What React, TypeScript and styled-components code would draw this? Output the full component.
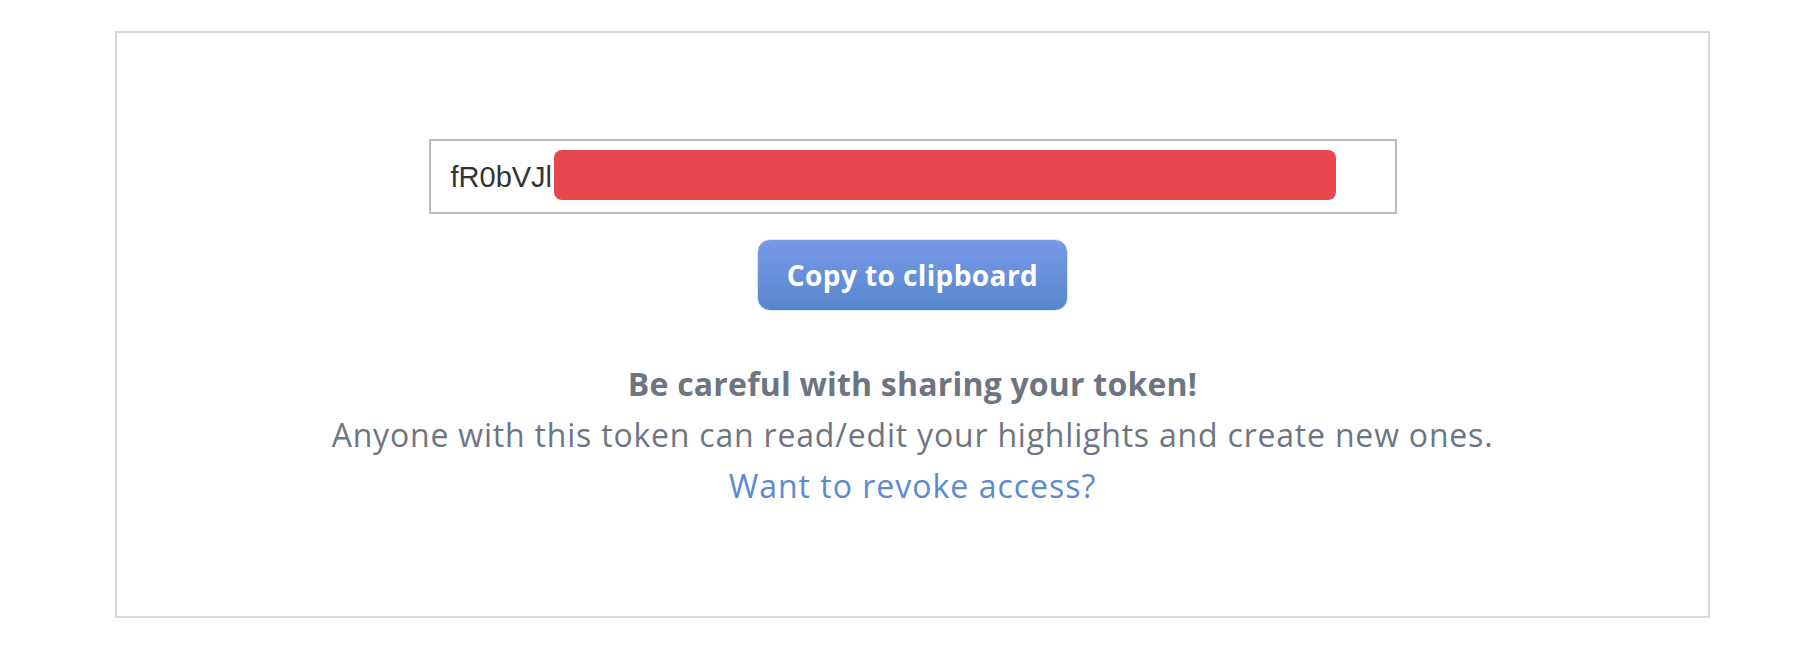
import * as React from "react"
import styled, {createGlobalStyle} from "styled-components"

const GlobalStyle = createGlobalStyle`
  body {
    margin: 0;
    background: #fff;
    font-family: 'Open Sans', 'Noto Sans', sans-serif;
  }
`

export default function App() {
    return (
        <>
            <GlobalStyle />
            <Page>
                <Panel>
                    <TokenField>
                        <TokenText>fR0bVJl</TokenText>
                        <Redaction />
                    </TokenField>

                    <CopyButton type="button">Copy to clipboard</CopyButton>

                    <Notice>
                        <Warning>Be careful with sharing your token!</Warning>
                        <NoticeLine>Anyone with this token can read/edit your highlights and create new ones.</NoticeLine>
                        <RevokeLink href="#">Want to revoke access?</RevokeLink>
                    </Notice>
                </Panel>
            </Page>
        </>
    )
}

const Page = styled("div")`
  padding: 31px 90px 0 115px;
  box-sizing: border-box;
  width: 100%;
`

const Panel = styled("section")`
  width: 1595px;
  height: 587px;
  box-sizing: border-box;
  border: 2px solid #d8d8db;
  padding-top: 106px;
  display: flex;
  flex-direction: column;
  align-items: center;
`

const TokenField = styled("div")`
  width: 968px;
  height: 75px;
  box-sizing: border-box;
  border: 2px solid #bcbcbc;
  padding: 0 0 0 20px;
  display: flex;
  align-items: center;
`

const TokenText = styled("span")`
  font-family: 'Liberation Sans', Arial, sans-serif;
  font-size: 29px;
  color: #333;
  margin-top: 2px;
`

const Redaction = styled("span")`
  display: block;
  width: 782px;
  height: 50px;
  margin: -3px 0 0 2px;
  border-radius: 8px;
  background: #e5474c;
`

const CopyButton = styled("button")`
  margin-top: 25px;
  width: 311px;
  height: 72px;
  border: 1px solid #dfe6f5;
  border-radius: 13px;
  background: linear-gradient(#7899e8, #5787cd);
  color: #fff;
  font-family: 'Open Sans', 'Noto Sans', sans-serif;
  font-weight: 700;
  font-size: 28px;
  letter-spacing: 0.4px;
  cursor: pointer;
`

const Notice = styled("div")`
  margin-top: 47px;
  display: flex;
  flex-direction: column;
  align-items: center;
  font-size: 32px;
  line-height: 51px;
  color: #6e7582;
  text-align: center;
`

const Warning = styled("strong")`
  font-weight: 700;
  letter-spacing: 0.2px;
`

const NoticeLine = styled("span")`
  font-weight: 400;
  letter-spacing: 0.8px;
`

const RevokeLink = styled("a")`
  color: #5b8acf;
  text-decoration: none;
  letter-spacing: 1px;
`
